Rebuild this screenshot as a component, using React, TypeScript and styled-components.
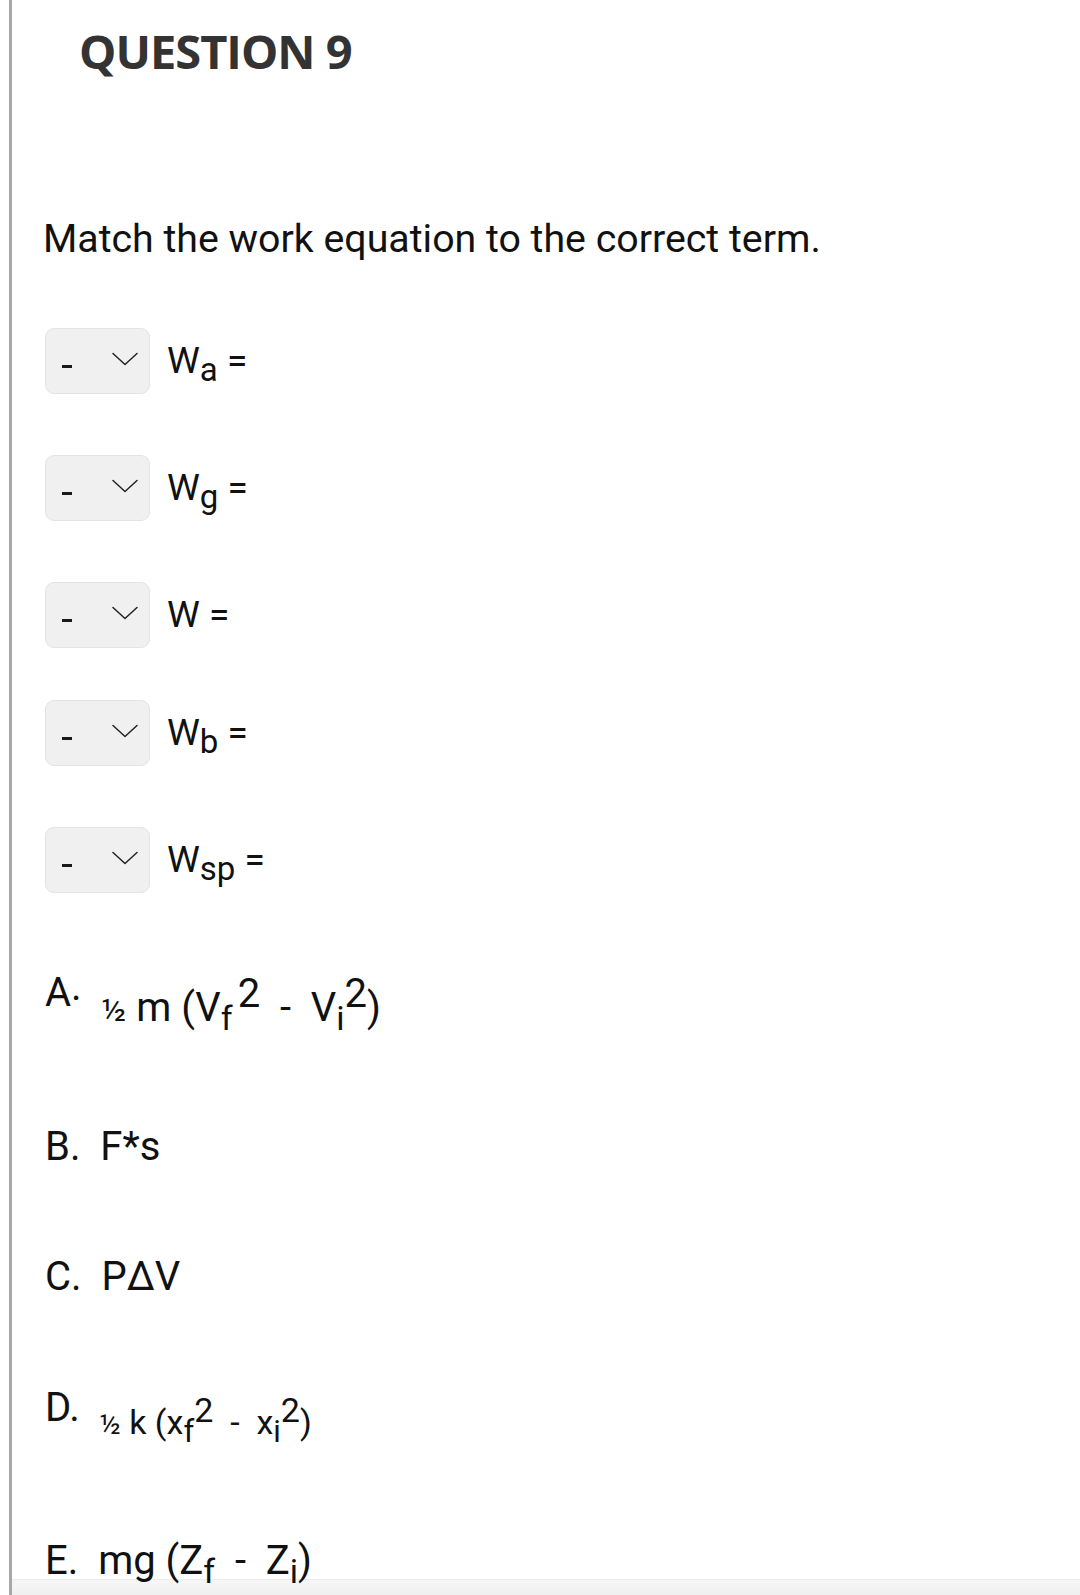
import React from "react";
import styled, { createGlobalStyle } from "styled-components";

const GlobalStyle = createGlobalStyle`
  html, body {
    margin: 0;
    padding: 0;
    background: #ffffff;
  }
  body {
    font-family: Roboto, "Liberation Sans", Arial, sans-serif;
    color: #111111;
  }
`;

const Page = styled.div`
  box-sizing: border-box;
  margin-left: 9px;
  border-left: 3px solid #a8a8a8;
  min-height: 1595px;
  padding-top: 21px;
  display: flex;
  flex-direction: column;
  position: relative;
  overflow: hidden;
`;

const BottomShade = styled.div`
  position: absolute;
  left: 0;
  right: 0;
  bottom: 0;
  height: 15px;
  background: linear-gradient(#f7f7f7, #efefef);
  border-top: 1px solid #ededed;
  z-index: 0;
`;

const Content = styled.div`
  position: relative;
  z-index: 1;
  display: flex;
  flex-direction: column;
`;

const Title = styled.h1`
  margin: 0;
  padding-left: 67px;
  font-family: "Open Sans", "Noto Sans", sans-serif;
  font-weight: 700;
  font-size: 47px;
  line-height: 60px;
  color: #333333;
  letter-spacing: -1px;
`;

const Prompt = styled.p`
  margin: 135px 0 0;
  padding-left: 31px;
  font-size: 39.3px;
  line-height: 46px;
  color: #111111;
`;

const MatchList = styled.div`
  margin-top: 66px;
  padding-left: 33px;
  display: flex;
  flex-direction: column;
`;

const Row = styled.div<{ $gap: number }>`
  display: flex;
  align-items: center;
  gap: 17px;
  height: 66px;
  margin-top: ${(p) => p.$gap}px;
`;

const Select = styled.div`
  box-sizing: border-box;
  width: 105px;
  height: 66px;
  background: #f0f0f0;
  border: 1px solid #e4e4e4;
  border-radius: 9px;
  display: flex;
  align-items: center;
  justify-content: space-between;
  padding: 0 11px 0 16px;
`;

const Dash = styled.span`
  display: block;
  width: 10px;
  height: 3px;
  background: #1a1a1a;
  margin-top: 10px;
`;

const Chevron = () => (
  <svg width="26" height="14" viewBox="0 0 26 14" fill="none" style={{ marginTop: -4 }}>
    <path d="M1 1.5 L13 12.5 L25 1.5" stroke="#222" strokeWidth="1.5" strokeLinecap="round" strokeLinejoin="round" />
  </svg>
);

const Term = styled.span`
  font-size: 37px;
  line-height: 44px;
  color: #111111;
  white-space: pre;
`;

const Sub = styled.span<{ $size?: number; $drop?: number }>`
  font-size: ${(p) => p.$size ?? 33}px;
  vertical-align: ${(p) => -(p.$drop ?? 8)}px;
  line-height: 0;
`;

const Sup = styled.span<{ $rise?: number; $lead?: number }>`
  vertical-align: ${(p) => p.$rise ?? 14}px;
  margin-left: ${(p) => p.$lead ?? 0}px;
  line-height: 0;
`;

const Options = styled.div`
  margin-top: 76px;
  padding-left: 33px;
  display: flex;
  flex-direction: column;
`;

const Option = styled.div<{ $gap: number }>`
  height: 48px;
  margin-top: ${(p) => p.$gap}px;
  font-size: 40px;
  line-height: 48px;
  color: #111111;
  white-space: pre;
`;

const RaisedDot = styled.span`
  position: relative;
  top: -6px;
`;

const Formula = styled.span<{ $size: number; $drop: number }>`
  font-size: ${(p) => p.$size}px;
  vertical-align: ${(p) => -p.$drop}px;
  line-height: 0;
`;

const Half = styled.span`
  font-size: 0.8em;
`;

const rows: { label: React.ReactNode; gap: number }[] = [
  { label: <>W<Sub>a</Sub> =</>, gap: 0 },
  { label: <>W<Sub>g</Sub> =</>, gap: 61 },
  { label: <>W =</>, gap: 61 },
  { label: <>W<Sub>b</Sub> =</>, gap: 52 },
  { label: <>W<Sub>sp</Sub> =</>, gap: 61 },
];

export default function App() {
  return (
    <>
      <GlobalStyle />
      <Page>
        <BottomShade />
        <Content>
          <Title>QUESTION 9</Title>
          <Prompt>Match the work equation to the correct term.</Prompt>

          <MatchList>
            {rows.map((r, i) => (
              <Row key={i} $gap={r.gap}>
                <Select>
                  <Dash />
                  <Chevron />
                </Select>
                <Term>{r.label}</Term>
              </Row>
            ))}
          </MatchList>

          <Options>
            <Option $gap={0}>
              A<RaisedDot>.</RaisedDot>{"  "}
              <Formula $size={40} $drop={15}>
                <Half>½</Half> m (V<Sub $size={34} $drop={9}>f</Sub><Sup $lead={5}>2</Sup>  -  V<Sub $size={34} $drop={9}>i</Sub><Sup>2</Sup>)
              </Formula>
            </Option>
            <Option $gap={106}>B.  F*s</Option>
            <Option $gap={82}>C.  PΔV</Option>
            <Option $gap={83}>
              D.{"  "}
              <Formula $size={34} $drop={13}>
                <Half>½</Half> k (x<Sub $size={31} $drop={8}>f</Sub><Sup $rise={12}>2</Sup>  -  x<Sub $size={31} $drop={8}>i</Sub><Sup $rise={12}>2</Sup>)
              </Formula>
            </Option>
            <Option $gap={105}>
              E.  mg (Z<Sub $size={34} $drop={9}>f</Sub>  -  Z<Sub $size={34} $drop={9}>i</Sub>)
            </Option>
          </Options>
        </Content>
      </Page>
    </>
  );
}
